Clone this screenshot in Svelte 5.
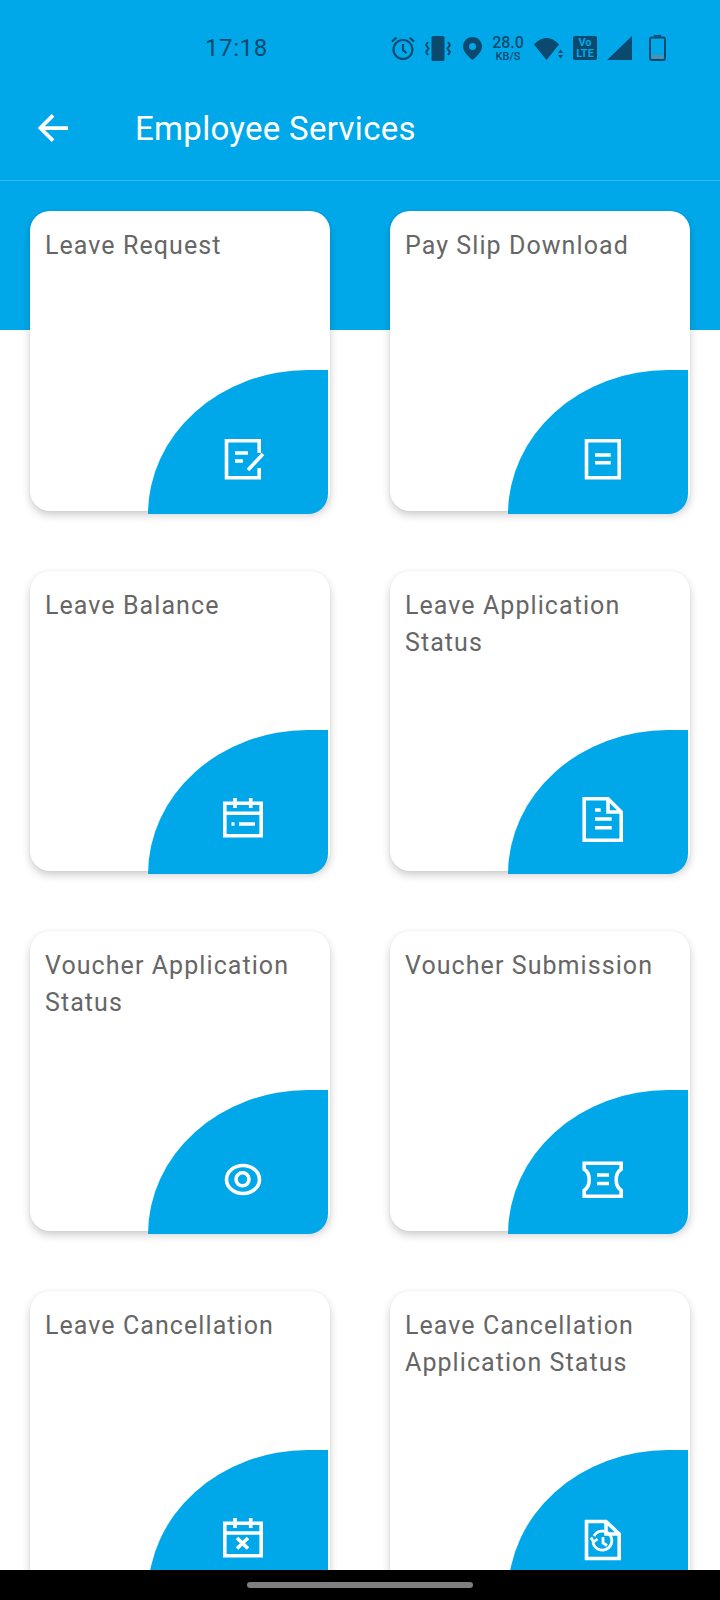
<script>
  const clock = 'M15 21a9.5 9.5 0 1 1-1 6.5M12 22.5l2.5 4.5 4-3M24 22v6l4 2.5';
  const services = [
    { title: 'Leave Request', icon: 'M40.2 18V5.8H7.5v37h32.7V33M16 18h13M16 26h8M29 35l15-16' },
    { title: 'Pay Slip Download', icon: 'M7.5 5.8h32.7v37H7.5zM16 20h15.7M16 27.7h15.7' },
    { title: 'Leave Balance', icon: 'M5.8 8.2h36.4v32.6H5.8zM5.8 18.2h36.4M16 3v10M31.7 3v10M20 29h16M12.5 29h3' },
    { title: 'Leave Application Status', icon: 'M5.2 3.8H29l13.2 13.2v28.2h-37zM16 15h5.7M16 24h16.7M16 32.7h16.7M29 4v13h13' },
    { title: 'Voucher Application Status', icon: 'M7.5 24.5a16.5 14 0 1 0 33 0a16.5 14 0 1 0-33 0zM17 24.3a6.5 6.5 0 1 0 13 0a6.5 6.5 0 1 0-13 0z' },
    { title: 'Voucher Submission', icon: 'M5.2 8.2h37v6q-5 3-5 10.5t5 10.5v6h-37v-6q5-3 5-10.5t-5-10.5zM18 20h12M18 28.5h12' },
    { title: 'Leave Cancellation', icon: 'M5.8 8.2h36.4v32.6H5.8zM5.8 18h36.4M16 3v10M31.7 3v10M18 23l11 10.5M29 23l-11 10.5' },
    { title: 'Leave Cancellation Application Status', icon: 'M7.5 6.5H27l13.2 12.5v24.5H7.5zM27 7v12h13', extra: clock }
  ];
</script>

<div class="phone">
  <header class="top">
    <div class="status">
      <span class="time">17:18</span>
      <div class="indicators">
        <svg class="alarm" viewBox="0 0 24 24" fill="none" stroke="currentColor" stroke-width="2.2">
          <circle cx="12" cy="13.5" r="9.5" />
          <path d="M12 8v6l3.5 3M1 5.5 5.5 1.5M23 5.5 18.5 1.5" />
        </svg>
        <svg class="vibrate" viewBox="0 0 26 25" fill="none" stroke="currentColor" stroke-width="2">
          <rect x="6.5" y="0" width="13" height="25" rx="1.5" fill="currentColor" stroke="none" />
          <path d="M3 6 1 9l2.5 3.5L1 16l2 3M23 6l2 3-2.5 3.5L25 16l-2 3" />
        </svg>
        <svg class="pin" viewBox="0 0 19 23" fill="currentColor">
          <path fill-rule="evenodd" d="M9.5 0C4.2 0 0 4.2 0 9.5 0 15 6 20 9.5 23 13 20 19 15 19 9.5 19 4.2 14.8 0 9.5 0zm0 6a3.5 3.5 0 1 1 0 7 3.5 3.5 0 0 1 0-7z" />
        </svg>
        <div class="speed">
          <span class="rate">28.0</span>
          <span class="unit">KB/S</span>
        </div>
        <svg class="wifi" viewBox="0 0 29 22" fill="currentColor">
          <path d="M0 6.5C3.5 2.5 8 0 12.5 0S21.5 2.5 25 6.5L12.5 22z" />
          <path d="M26.5 11.5 24 15h5zM24 17l2.5 3.5L29 17z" />
        </svg>
        <div class="volte">
          <span>Vo</span>
          <span>LTE</span>
        </div>
        <svg class="signal" viewBox="0 0 25 24" fill="currentColor"><path d="M25 0v24H0z" /></svg>
        <svg class="battery" viewBox="0 0 17 26" fill="none">
          <path d="M5 1.5V0h7v1.5" fill="currentColor" />
          <rect x="1" y="2.5" width="15" height="22.5" rx="2" stroke="currentColor" stroke-width="2" />
          <rect x="3" y="20" width="11" height="3.5" fill="#5b8ea5" />
        </svg>
      </div>
    </div>
    <div class="toolbar">
      <svg class="back" viewBox="0 0 32 30" fill="none" stroke="#fff" stroke-width="4">
        <path d="M32 15H3M16 1.5 2.5 15 16 28.5" />
      </svg>
      <h1>Employee Services</h1>
    </div>
  </header>

  <main class="grid">
    {#each services as s}
      <section class="card">
        <h2>{s.title}</h2>
        <div class="corner">
          <svg viewBox="0 0 48 48" fill="none" stroke="#fff" stroke-width="3.6">
            <path d={s.icon} />
            {#if s.extra}<path d={s.extra} stroke-width="2.8" />{/if}
          </svg>
        </div>
      </section>
    {/each}
  </main>

  <footer class="nav"><span class="pill"></span></footer>
</div>

<style>
  :global(body) {
    margin: 0;
    background: #fff;
  }
  .phone {
    display: flex;
    flex-direction: column;
    width: 720px;
    height: 1600px;
    overflow: hidden;
    font-family: Roboto, sans-serif;
  }
  .top {
    flex: none;
    height: 180px;
    background: #00a8ea;
    border-bottom: 1px solid #2dbcf3;
    color: #0b4a6e;
  }
  .status {
    display: flex;
    align-items: center;
    height: 48px;
    padding: 24px 54px 0 205px;
  }
  .time {
    font-size: 24px;
    letter-spacing: 0.6px;
    color: #0b4a6e;
  }
  .indicators {
    display: flex;
    align-items: center;
    gap: 10px;
    margin-left: auto;
  }
  .alarm { width: 24px; height: 24px; }
  .vibrate { width: 26px; height: 25px; }
  .pin { width: 19px; height: 23px; margin-left: 2px; }
  .wifi { width: 29px; height: 22px; margin-top: 2px; }
  .signal { width: 25px; height: 24px; }
  .battery { width: 17px; height: 26px; margin-left: 7px; }
  .speed {
    display: flex;
    flex-direction: column;
    align-items: center;
    width: 32px;
    font-weight: 500;
  }
  .rate {
    font-size: 16px;
    line-height: 16px;
  }
  .unit {
    font-size: 11px;
    line-height: 11px;
  }
  .volte {
    display: flex;
    flex-direction: column;
    align-items: center;
    justify-content: center;
    width: 24px;
    height: 24px;
    border-radius: 2px;
    background: #0b4a6e;
    color: #00a8ea;
    font-size: 11px;
    font-weight: 700;
    line-height: 11px;
  }
  .toolbar {
    display: flex;
    align-items: center;
    height: 112px;
    padding-left: 38px;
  }
  .back {
    width: 30px;
    height: 30px;
  }
  h1 {
    margin: 0 0 0 67px;
    font-size: 33px;
    font-weight: 400;
    letter-spacing: 0.3px;
    color: #fff;
  }
  .grid {
    flex: 1;
    min-height: 0;
    display: grid;
    grid-template-columns: 300px 300px;
    grid-auto-rows: 300px;
    gap: 60px;
    padding: 30px;
    overflow: hidden;
    background: linear-gradient(#00a8ea 149px, #fff 149px);
  }
  .card {
    display: flex;
    flex-direction: column;
    background: #fff;
    border-radius: 20px;
    box-shadow: 0 4px 8px rgba(0, 0, 0, 0.2), 0 0 2px rgba(0, 0, 0, 0.06);
  }
  h2 {
    margin: 0;
    padding: 16px 15px 0;
    font-size: 25px;
    font-weight: 400;
    line-height: 37px;
    letter-spacing: 1.07px;
    color: #666;
  }
  .corner {
    display: flex;
    margin: auto 2px -3px auto;
    padding: 65px 0 0 71px;
    box-sizing: border-box;
    width: 180px;
    height: 144px;
    background: #00a8ea;
    border-radius: 160px 0 20px 0 / 144px 0 20px 0;
  }
  .corner svg {
    width: 48px;
    height: 48px;
  }
  .nav {
    flex: none;
    display: flex;
    align-items: center;
    justify-content: center;
    height: 30px;
    background: #000;
  }
  .pill {
    width: 226px;
    height: 6px;
    border-radius: 3px;
    background: #7f7f7f;
  }
</style>
